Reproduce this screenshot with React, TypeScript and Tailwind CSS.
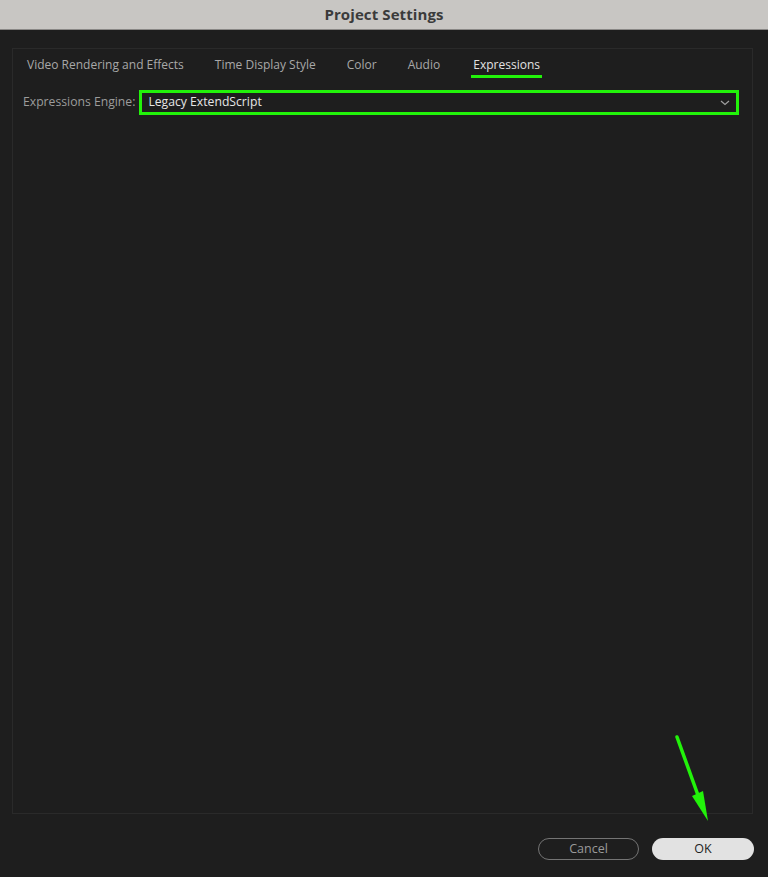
import React from "react";

const font = { fontFamily: '"Open Sans", "Noto Sans", Arial, sans-serif' };

export default function App() {
  const tabs = [
    { label: "Video Rendering and Effects", active: false },
    { label: "Time Display Style", active: false },
    { label: "Color", active: false },
    { label: "Audio", active: false },
    { label: "Expressions", active: true },
  ];
  return (
    <div className="w-[768px] h-[877px] bg-[#1e1e1e] flex flex-col relative overflow-hidden" style={font}>
      <div className="h-[30px] shrink-0 bg-[#c8c6c3] border-b border-[#8a8886] flex items-center justify-center">
        <span className="text-[15px] font-bold text-[#3b3b3b] tracking-[0.1px]">Project Settings</span>
      </div>
      <div className="flex-1 flex flex-col pl-[12px] pt-[18px]">
        <div className="w-[741px] h-[766px] border border-[#2a2a2a] flex flex-col">
          <div className="flex items-start h-[41px] pl-[14px] pt-[7px] gap-[31px]">
            {tabs.map((t) => (
              <div key={t.label} className="flex flex-col items-center">
                <span className={`text-[12px] leading-[18px] ${t.active ? "text-[#e2e2e2]" : "text-[#a8a8a8]"}`}>{t.label}</span>
                {t.active && <div className="mt-[1px] h-[3px] w-[71px] bg-[#22f20a]" />}
              </div>
            ))}
          </div>
          <div className="flex items-center pl-[10px] pr-[13px]">
            <span className="text-[12.2px] text-[#9c9c9c] mr-[4px]">Expressions Engine:</span>
            <div className="flex-1 h-[25px] border-[3px] border-[#22f20a] flex items-center justify-between pl-[6px] pr-[6px]">
              <span className="text-[12.2px] text-[#e6e6e6]">Legacy ExtendScript</span>
              <svg width="10" height="6" viewBox="0 0 10 6" fill="none">
                <path d="M1 1 L5 4.5 L9 1" stroke="#a0a0a0" strokeWidth="1.2" />
              </svg>
            </div>
          </div>
        </div>
        <div className="w-[742px] flex justify-end gap-[13px] pt-[24px]">
          <button className="w-[101px] h-[22px] rounded-full border-[1.5px] border-[#747474] text-[12.5px] text-[#9a9a9a] flex items-center justify-center">Cancel</button>
          <button className="w-[102px] h-[22px] rounded-full bg-[#e2e2e2] text-[12.5px] text-[#1e1e1e] flex items-center justify-center">OK</button>
        </div>
      </div>
      <svg className="absolute left-0 top-0 pointer-events-none" width="768" height="877">
        <line x1="677" y1="737" x2="699" y2="798" stroke="#22f20a" strokeWidth="3.5" strokeLinecap="round" />
        <polygon points="692,796 703,791 708,821" fill="#22f20a" />
      </svg>
    </div>
  );
}
